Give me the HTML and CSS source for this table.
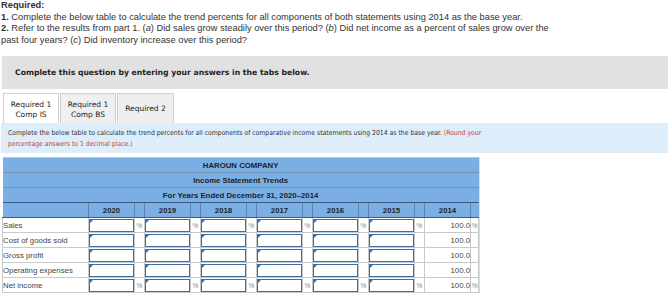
FILE: index.html
```html
<!DOCTYPE html>
<html lang="en">
	<head>
		<meta charset="UTF-8">
		<title>Trend Percents</title>
		<link rel="stylesheet" href="styles.css">
	</head>
	<body>
		<div class="required">
			<div class="req-title">Required:</div>
			<p><b>1.</b> Complete the below table to calculate the trend percents for all components of both statements using 2014 as the base year.</p>
			<p><b>2.</b> Refer to the results from part 1. (<i>a</i>) Did sales grow steadily over this period? (<i>b</i>) Did net income as a percent of sales grow over the<br>past four years? (<i>c</i>) Did inventory increase over this period?</p>
		</div>

		<div class="prompt">Complete this question by entering your answers in the tabs below.</div>

		<div class="tabs">
			<div class="tab active">Required 1<br>Comp IS</div>
			<div class="tab">Required 1<br>Comp BS</div>
			<div class="tab single">Required 2</div>
		</div>

		<div class="instr">
			Complete the below table to calculate the trend percents for all components of comparative income statements using 2014 as the base year. <span class="note">(Round your<br>percentage answers to 1 decimal place.)</span>
		</div>

		<table class="trend">
			<colgroup>
				<col class="c-label">
				<col class="c-val"><col class="c-pct">
				<col class="c-val"><col class="c-pct">
				<col class="c-val"><col class="c-pct">
				<col class="c-val"><col class="c-pct">
				<col class="c-val"><col class="c-pct">
				<col class="c-val"><col class="c-pct">
				<col class="c-val"><col class="c-last">
			</colgroup>
			<tr class="head"><th colspan="15">HAROUN COMPANY</th></tr>
			<tr class="head"><th colspan="15">Income Statement Trends</th></tr>
			<tr class="head"><th colspan="15">For Years Ended December 31, 2020&ndash;2014</th></tr>
			<tr class="years">
				<th></th>
				<th>2020</th><th></th>
				<th>2019</th><th></th>
				<th>2018</th><th></th>
				<th>2017</th><th></th>
				<th>2016</th><th></th>
				<th>2015</th><th></th>
				<th>2014</th><th></th>
			</tr>
			<tr>
				<td class="label">Sales</td>
				<td class="cell"><div class="inp"></div></td><td class="pct">%</td>
				<td class="cell"><div class="inp"></div></td><td class="pct">%</td>
				<td class="cell"><div class="inp"></div></td><td class="pct">%</td>
				<td class="cell"><div class="inp"></div></td><td class="pct">%</td>
				<td class="cell"><div class="inp"></div></td><td class="pct">%</td>
				<td class="cell"><div class="inp"></div></td><td class="pct">%</td>
				<td class="base">100.0</td><td class="pct">%</td>
			</tr>
			<tr>
				<td class="label">Cost of goods sold</td>
				<td class="cell"><div class="inp"></div></td><td class="pct"></td>
				<td class="cell"><div class="inp"></div></td><td class="pct"></td>
				<td class="cell"><div class="inp"></div></td><td class="pct"></td>
				<td class="cell"><div class="inp"></div></td><td class="pct"></td>
				<td class="cell"><div class="inp"></div></td><td class="pct"></td>
				<td class="cell"><div class="inp"></div></td><td class="pct"></td>
				<td class="base">100.0</td><td class="pct"></td>
			</tr>
			<tr>
				<td class="label">Gross profit</td>
				<td class="cell"><div class="inp"></div></td><td class="pct"></td>
				<td class="cell"><div class="inp"></div></td><td class="pct"></td>
				<td class="cell"><div class="inp"></div></td><td class="pct"></td>
				<td class="cell"><div class="inp"></div></td><td class="pct"></td>
				<td class="cell"><div class="inp"></div></td><td class="pct"></td>
				<td class="cell"><div class="inp"></div></td><td class="pct"></td>
				<td class="base">100.0</td><td class="pct"></td>
			</tr>
			<tr>
				<td class="label">Operating expenses</td>
				<td class="cell"><div class="inp"></div></td><td class="pct"></td>
				<td class="cell"><div class="inp"></div></td><td class="pct"></td>
				<td class="cell"><div class="inp"></div></td><td class="pct"></td>
				<td class="cell"><div class="inp"></div></td><td class="pct"></td>
				<td class="cell"><div class="inp"></div></td><td class="pct"></td>
				<td class="cell"><div class="inp"></div></td><td class="pct"></td>
				<td class="base">100.0</td><td class="pct"></td>
			</tr>
			<tr>
				<td class="label">Net income</td>
				<td class="cell"><div class="inp"></div></td><td class="pct">%</td>
				<td class="cell"><div class="inp"></div></td><td class="pct">%</td>
				<td class="cell"><div class="inp"></div></td><td class="pct">%</td>
				<td class="cell"><div class="inp"></div></td><td class="pct">%</td>
				<td class="cell"><div class="inp"></div></td><td class="pct">%</td>
				<td class="cell"><div class="inp"></div></td><td class="pct">%</td>
				<td class="base">100.0</td><td class="pct">%</td>
			</tr>
		</table>
	</body>
</html>
```

FILE: styles.css
```css
body {
	margin: 0;
	background: #fff;
	color: #222;
}

/* question text */
.required {
	font-family: "Liberation Sans", Arial, sans-serif;
	font-size: 9.3px;
	line-height: 11.5px;
	color: #333;
	padding-left: 1px;
}

.required p {
	margin: 0;
}

.req-title {
	font-weight: bold;
}

.prompt {
	margin: 10px 0 0 2px;
	height: 33px;
	line-height: 33px;
	padding-left: 13px;
	background: #e1e1e1;
	font-family: "DejaVu Sans", Verdana, sans-serif;
	font-weight: bold;
	font-size: 7.7px;
	color: #222;
}

/* tabs */
.tabs {
	display: flex;
	gap: 1px;
	margin: 4px 0 0 3px;
	height: 30px;
}

.tab {
	box-sizing: border-box;
	width: 56px;
	height: 30px;
	padding-top: 6px;
	border: 1px solid #cfcfcf;
	border-bottom: none;
	background: #efefef;
	font-family: "DejaVu Sans", Verdana, sans-serif;
	font-size: 7.5px;
	line-height: 9.5px;
	text-align: center;
	color: #222;
}

.tab.active {
	background: #fff;
}

.tab.single {
	width: 57px;
	padding-top: 10px;
}

.instr {
	margin-left: 1px;
	height: 30px;
	box-sizing: border-box;
	padding: 5px 0 0 7px;
	background: #ddedf9;
	font-family: "DejaVu Sans Condensed", "DejaVu Sans", Tahoma, sans-serif;
	font-size: 6.8px;
	line-height: 10.5px;
	color: #333;
}

.instr .note {
	color: #c9403a;
}

/* trend table */
table.trend {
	margin: 4px 0 0 2px;
	border-collapse: collapse;
	table-layout: fixed;
	width: 476px;
	font-family: "Liberation Sans", Arial, sans-serif;
	font-size: 7.8px;
	color: #444;
	box-shadow: 1px 0 0 #ddd;
}

col.c-label { width: 86px; }
col.c-val { width: 46px; }
col.c-pct { width: 10px; }
col.c-last { width: 8px; }

table.trend tr {
	height: 15px;
}

table.trend th {
	padding: 0;
	background: #7aafe5;
	font-weight: bold;
	color: #222;
	text-align: center;
}

tr.head th {
	border-top: 1px solid #7393b5;
}

tr.head:first-child th {
	border-top: 1px solid #b9c9d9;
}

tr.years th {
	border-top: 1px solid #3a5b80;
	border-left: 1px solid #5d84ad;
	border-bottom: 1px solid #3a5b80;
}

tr.years th:first-child {
	border-left: none;
}

table.trend td {
	padding: 0;
	border: 1px solid #c9c9c9;
	height: 14px;
}

td.label {
	padding-left: 3px;
	white-space: nowrap;
}

td.cell {
	padding: 1px 0;
}

.inp {
	position: relative;
	height: 11px;
	border: 1px solid #3d6da6;
	background: #fff;
}

/* little marker in the corner of each answer box */
.inp::before {
	content: "";
	position: absolute;
	left: 0;
	top: 0;
	border-top: 3px solid #2e6bc4;
	border-right: 3px solid transparent;
}

td.pct {
	text-align: center;
	font-size: 6.5px;
	color: #888;
}

td.base {
	text-align: right;
	padding-right: 2px;
}
```
